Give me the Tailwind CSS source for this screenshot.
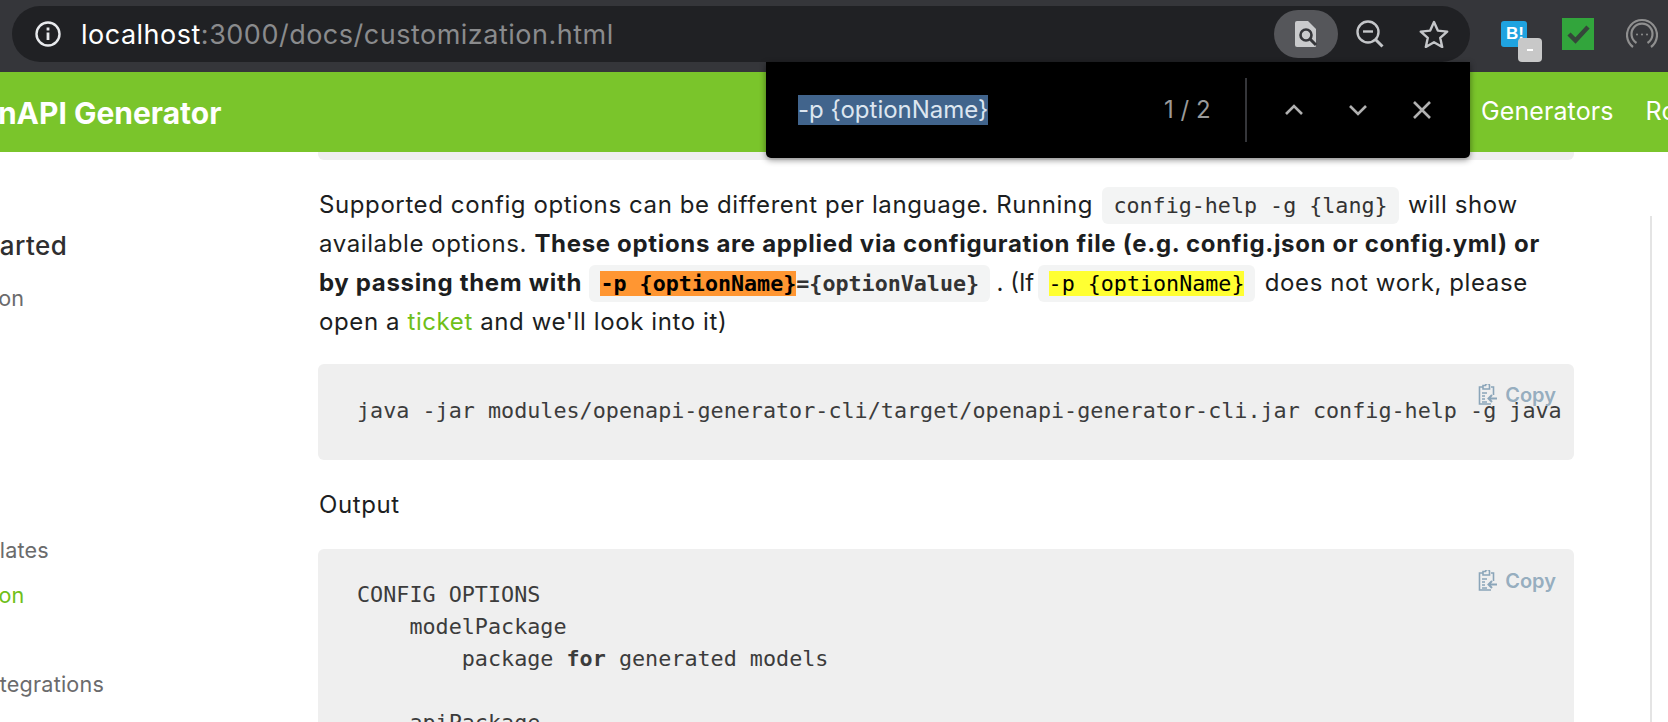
<!DOCTYPE html>
<html lang="en">
  <head>
    <meta charset="UTF-8" />
    <meta name="viewport" content="width=device-width, initial-scale=1.0" />
    <title>Customization</title>
    <script src="https://cdn.jsdelivr.net/npm/@tailwindcss/browser@4"></script>
  </head>
  <body class="w-[1668px] h-[722px] overflow-hidden relative bg-white font-['Inter',sans-serif] text-[#1c1e21]">
    <!-- browser toolbar -->
    <div class="h-[72px] bg-[#35363a] flex items-start pt-[6px] pl-[12px]">
      <div class="w-[1458px] h-[56px] bg-[#202124] rounded-full flex items-center pl-[22px] pr-[21px]">
        <svg class="w-[28px] h-[28px] shrink-0" viewBox="0 0 28 28" fill="none" stroke="#e8eaed" stroke-width="2.4">
          <circle cx="14" cy="14" r="11.5" />
          <path d="M14 12.5v7.5" stroke-width="2.8" />
          <path d="M14 7.5v3" stroke-width="2.8" />
        </svg>
        <div class="ml-[19px] mt-[2px] text-[27px] tracking-[0.5px] text-[#8a8b8d] whitespace-nowrap"><span class="text-white">localhost</span>:3000/docs/customization.html</div>
        <div class="ml-auto flex items-center">
          <div class="w-[64px] h-[48px] rounded-full bg-[#55565a] flex items-center justify-center">
            <svg class="w-[24px] h-[28px]" viewBox="0 0 24 28">
              <path d="M1 3a2 2 0 0 1 2-2h11l8 8v17a1 1 0 0 1-1 1H3a2 2 0 0 1-2-2z" fill="#c9cacc" />
              <circle cx="12" cy="15" r="5.5" fill="none" stroke="#35363a" stroke-width="2.6" />
              <path d="M16 19l6 6" stroke="#35363a" stroke-width="3" />
            </svg>
          </div>
          <svg class="ml-[18px] w-[28px] h-[28px]" viewBox="0 0 28 28" fill="none" stroke="#c4c6c9" stroke-width="2.4">
            <circle cx="12" cy="12" r="10.5" />
            <path d="M7 11.5h10" />
            <path d="M19.5 19.5l7 7" stroke-width="3" />
          </svg>
          <svg class="ml-[35px] w-[30px] h-[28px]" viewBox="0 0 30 28" fill="none" stroke="#c4c6c9" stroke-width="2.4" stroke-linejoin="round">
            <path d="M15 2l3.8 8.6 9.4 1-7 6.2 2 9.2-8.2-4.7L6.800 27l2-9.200-7-6.200 9.400-1z" />
          </svg>
        </div>
      </div>
      <!-- extension icons -->
      <div class="relative w-[198px] h-[60px]">
        <div class="absolute left-[31px] top-[15px] w-[26px] h-[26px] rounded-[3px] bg-[#1fa3e0] text-white text-[17px] font-bold leading-[26px] pl-[5px] font-['Liberation_Sans',sans-serif]">B!</div>
        <div class="absolute left-[48px] top-[32px] w-[24px] h-[24px] rounded-[4px] bg-[#c8c8c8] flex items-center justify-center">
          <div class="w-[6px] h-[2px] bg-white"></div>
        </div>
        <svg class="absolute left-[92px] top-[12px] w-[32px] h-[32px]" viewBox="0 0 32 32">
          <rect width="32" height="32" fill="#32a53c" />
          <path d="M7 16l6.500 6.500L26 9" fill="none" stroke="#35463a" stroke-width="4.500" />
        </svg>
        <svg class="absolute left-[156px] top-[12px] w-[32px] h-[32px]" viewBox="0 0 32 32" fill="none" stroke="#8f8f8f" stroke-width="2.200">
          <path d="M7 29a15 15 0 1 1 18 0" />
          <path d="M10.500 25a10.500 10.500 0 1 1 11 0" />
          <circle cx="11" cy="16.500" r="1" fill="#8f8f8f" stroke="none" />
          <circle cx="16" cy="16.500" r="1" fill="#8f8f8f" stroke="none" />
          <circle cx="21" cy="16.500" r="1" fill="#8f8f8f" stroke="none" />
        </svg>
      </div>
    </div>

    <!-- site header -->
    <div class="h-[80px] bg-[#7ac52b] flex items-center text-white whitespace-nowrap">
      <div class="w-[1481px] shrink-0 mt-[2px]">
        <div class="-ml-[62px] text-[30px] font-bold">OpenAPI Generator</div>
      </div>
      <div class="flex gap-[32px] text-[25px] tracking-[0.1px]">
        <span>Generators</span>
        <span>Roadmap</span>
      </div>
    </div>

    <!-- page body -->
    <div class="flex">
      <aside class="w-[318px] shrink-0 overflow-hidden pt-[77px] text-[21.6px] tracking-[0.2px] leading-[30px] text-[#6b6b6c] whitespace-nowrap">
        <div class="-ml-[124px]">
          <div class="-ml-[4px] text-[26px] tracking-[0.5px] leading-[34px] font-medium text-[#2f2f30]">Getting Started</div>
          <div class="ml-[36px] mt-[20px]">Installation</div>
          <div class="mt-[222px]">Using Templates</div>
          <div class="mt-[15px] text-[#6fbf1a]">Customization</div>
          <div class="mt-[59px]">Workflow Integrations</div>
        </div>
      </aside>

      <main class="w-[1256px] shrink-0">
        <div class="h-[8px] bg-[#efefef] rounded-b-[6px]"></div>
        <p class="mt-[26px] pl-[1px] pr-[30px] text-[24px] tracking-[0.6px] leading-[38.4px]">
          Supported config options can be different per language. Running
          <code class="mx-[2px] px-[11px] py-[6px] rounded-[6px] bg-[#f3f4f4] text-[21.7px] tracking-normal font-['DejaVu_Sans_Mono',monospace] text-[#333]">config-help -g {lang}</code>
          will show available options.
          <strong class="font-bold tracking-[0.67px]">These options are applied via configuration file (e.g. config.json or config.yml) or by passing them with</strong>
          <code class="mr-[2px] px-[11px] py-[6px] rounded-[6px] bg-[#f3f4f4] text-[21.7px] tracking-normal font-bold font-['DejaVu_Sans_Mono',monospace] text-[#333]"><mark class="bg-[#ff9632] text-black">-p {optionName}</mark>={optionValue}</code>
          <span class="-ml-[3px] -mr-[6px] tracking-normal">. (If</span>
          <code class="mx-[2px] px-[11px] py-[6px] rounded-[6px] bg-[#f3f4f4] text-[21.7px] tracking-normal font-['DejaVu_Sans_Mono',monospace] text-[#333]"><mark class="bg-[#ffff32] text-black">-p {optionName}</mark></code>
          does not work, please open a <a class="text-[#6fbf1a]">ticket</a> and we'll look into it)
        </p>

        <div class="relative mt-[22px] h-[96px] rounded-[6px] bg-[#efefef] pl-[39px] pt-[31px] text-[21.75px] leading-[32px] font-['DejaVu_Sans_Mono',monospace] text-[#3c3c3c]">
          <pre class="font-['DejaVu_Sans_Mono',monospace]">java -jar modules/openapi-generator-cli/target/openapi-generator-cli.jar config-help -g java</pre>
          <div class="absolute right-[18px] top-[19px] flex items-center gap-[8px] text-[20px] leading-[24px] font-semibold font-['Inter',sans-serif] text-[#8ba5b9]/90">
            <svg class="w-[19px] h-[21px]" viewBox="0 0 19 21" fill="none" stroke="#8ba5b9" stroke-width="1.600">
              <path d="M13 3h2.500v8M13 20H1.500V3H5" />
              <path d="M5 1.500h2.500a2 2 0 0 1 4 0V5H5z" />
              <path d="M4 9h5M4 12h3M4 15h3M4 18h5" stroke-width="1.400" />
              <path d="M19 14.500h-8M14 11l-3.500 3.500L14 18" stroke-width="2" />
            </svg>
            <span>Copy</span>
          </div>
        </div>

        <p class="mt-[26px] pl-[1px] text-[24px] tracking-[0.6px] leading-[38px]">Output</p>

        <div class="relative mt-[25px] h-[300px] rounded-[6px] bg-[#efefef] pl-[39px] pt-[30px] text-[21.75px] leading-[32px] font-['DejaVu_Sans_Mono',monospace] text-[#3c3c3c]">
          <pre class="font-['DejaVu_Sans_Mono',monospace]">CONFIG OPTIONS
    modelPackage
        package <b>for</b> generated models

    apiPackage</pre>
          <div class="absolute right-[18px] top-[20px] flex items-center gap-[8px] text-[20px] leading-[24px] font-semibold font-['Inter',sans-serif] text-[#8ba5b9]/90">
            <svg class="w-[19px] h-[21px]" viewBox="0 0 19 21" fill="none" stroke="#8ba5b9" stroke-width="1.600">
              <path d="M13 3h2.500v8M13 20H1.500V3H5" />
              <path d="M5 1.500h2.500a2 2 0 0 1 4 0V5H5z" />
              <path d="M4 9h5M4 12h3M4 15h3M4 18h5" stroke-width="1.400" />
              <path d="M19 14.500h-8M14 11l-3.500 3.500L14 18" stroke-width="2" />
            </svg>
            <span>Copy</span>
          </div>
        </div>
      </main>
    </div>

    <!-- right side rail -->
    <div class="absolute left-[1650px] top-[216px] w-[2px] h-[506px] bg-[#e4e4e4]"></div>

    <!-- find in page bar -->
    <div class="absolute left-[766px] top-[62px] w-[704px] h-[96px] bg-black rounded-b-[5px] shadow-[0_2px_6px_rgba(0,0,0,0.45)] flex items-center">
      <div class="ml-[32px] w-[366px] text-[24px] leading-[30px] text-[#dde6f0]"><span class="inline-block bg-[#41648c]">-p {optionName}</span></div>
      <div class="w-[81px] text-[24px] text-[#9a9a9a]">1 / 2</div>
      <div class="w-[2px] h-[64px] bg-[#35363a]"></div>
      <div class="ml-[38px] flex gap-[46px]">
        <svg class="w-[18px] h-[18px]" viewBox="0 0 18 18" fill="none" stroke="#b0b0b0" stroke-width="2.600"><path d="M1 13l8-8 8 8" /></svg>
        <svg class="w-[18px] h-[18px]" viewBox="0 0 18 18" fill="none" stroke="#b0b0b0" stroke-width="2.600"><path d="M1 5l8 8 8-8" /></svg>
        <svg class="w-[18px] h-[18px]" viewBox="0 0 18 18" fill="none" stroke="#b0b0b0" stroke-width="2.600"><path d="M1 1l16 16M17 1L1 17" /></svg>
      </div>
    </div>
  </body>
</html>
